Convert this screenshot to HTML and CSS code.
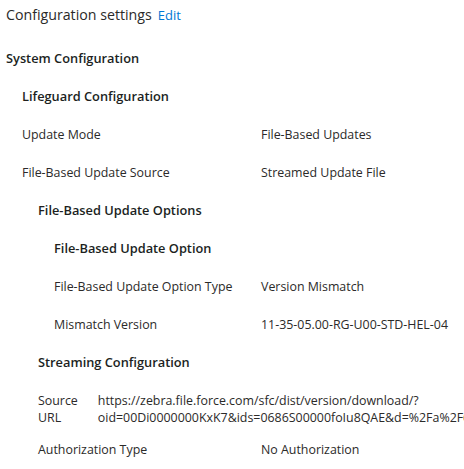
FILE: index.html
```html
<!DOCTYPE html>
<html lang="en">
<head>
<meta charset="utf-8">
<title>Configuration settings</title>
<link rel="stylesheet" href="styles.css">
</head>
<body>
<main class="page">
  <header class="title">
    <span class="title-text">Configuration settings</span>
    <a class="edit-link" href="#">Edit</a>
  </header>
  <section class="details">
    <div class="row heading">System Configuration</div>
    <div class="row heading lvl1">Lifeguard Configuration</div>
    <div class="row lvl1">
      <span class="label">Update Mode</span>
      <span class="value">File-Based Updates</span>
    </div>
    <div class="row lvl1">
      <span class="label">File-Based Update Source</span>
      <span class="value">Streamed Update File</span>
    </div>
    <div class="row heading lvl2">File-Based Update Options</div>
    <div class="row heading lvl3">File-Based Update Option</div>
    <div class="row lvl3">
      <span class="label">File-Based Update Option Type</span>
      <span class="value">Version Mismatch</span>
    </div>
    <div class="row lvl3">
      <span class="label">Mismatch Version</span>
      <span class="value">11-35-05.00-RG-U00-STD-HEL-04</span>
    </div>
    <div class="row heading lvl2">Streaming Configuration</div>
    <div class="row lvl2">
      <span class="label label-narrow">Source URL</span>
      <span class="value value-url">
        <span class="url-line">https://zebra.file.force.com/sfc/dist/version/download/?</span>
        <span class="url-line">oid=00Di0000000KxK7&amp;ids=0686S00000foIu8QAE&amp;d=%2Fa%2F6S</span>
      </span>
    </div>
    <div class="row lvl2">
      <span class="label">Authorization Type</span>
      <span class="value">No Authorization</span>
    </div>
  </section>
</main>
</body>
</html>
```

FILE: styles.css
```css
html, body {
  margin: 0;
  padding: 0;
  background: #ffffff;
  overflow: hidden;
}

body {
  font-family: "Open Sans", "Noto Sans", "Liberation Sans", sans-serif;
  color: #2b2a29;
}

.page {
  width: 464px;
  overflow: hidden;
  padding-left: 6px;
  box-sizing: border-box;
}

.title {
  display: flex;
  align-items: baseline;
  gap: 6px;
  height: 42px;
  box-sizing: border-box;
  padding-top: 4px;
  line-height: 21px;
  font-size: 14.2px;
}

.edit-link {
  color: #0078d4;
  text-decoration: none;
  font-size: 13px;
  line-height: 18px;
}

.row {
  display: flex;
  min-height: 38px;
  padding: 8px 0 7px;
  box-sizing: border-box;
  font-size: 12.4px;
  line-height: 17px;
  white-space: nowrap;
}

.heading {
  font-weight: 650;
  font-size: 12.8px;
  color: #201f1e;
}

.lvl1 { padding-left: 16px; }
.lvl2 { padding-left: 32px; }
.lvl3 { padding-left: 48px; }

.label {
  flex: none;
  width: 255px;
}

.lvl1 .label { width: 239px; }
.lvl2 .label { width: 223px; }
.lvl3 .label { width: 207px; }

.lvl2 .label-narrow {
  width: min-content;
  white-space: normal;
  margin-right: 20px;
}

.value {
  flex: none;
}

.url-line {
  display: block;
  white-space: nowrap;
}
```
